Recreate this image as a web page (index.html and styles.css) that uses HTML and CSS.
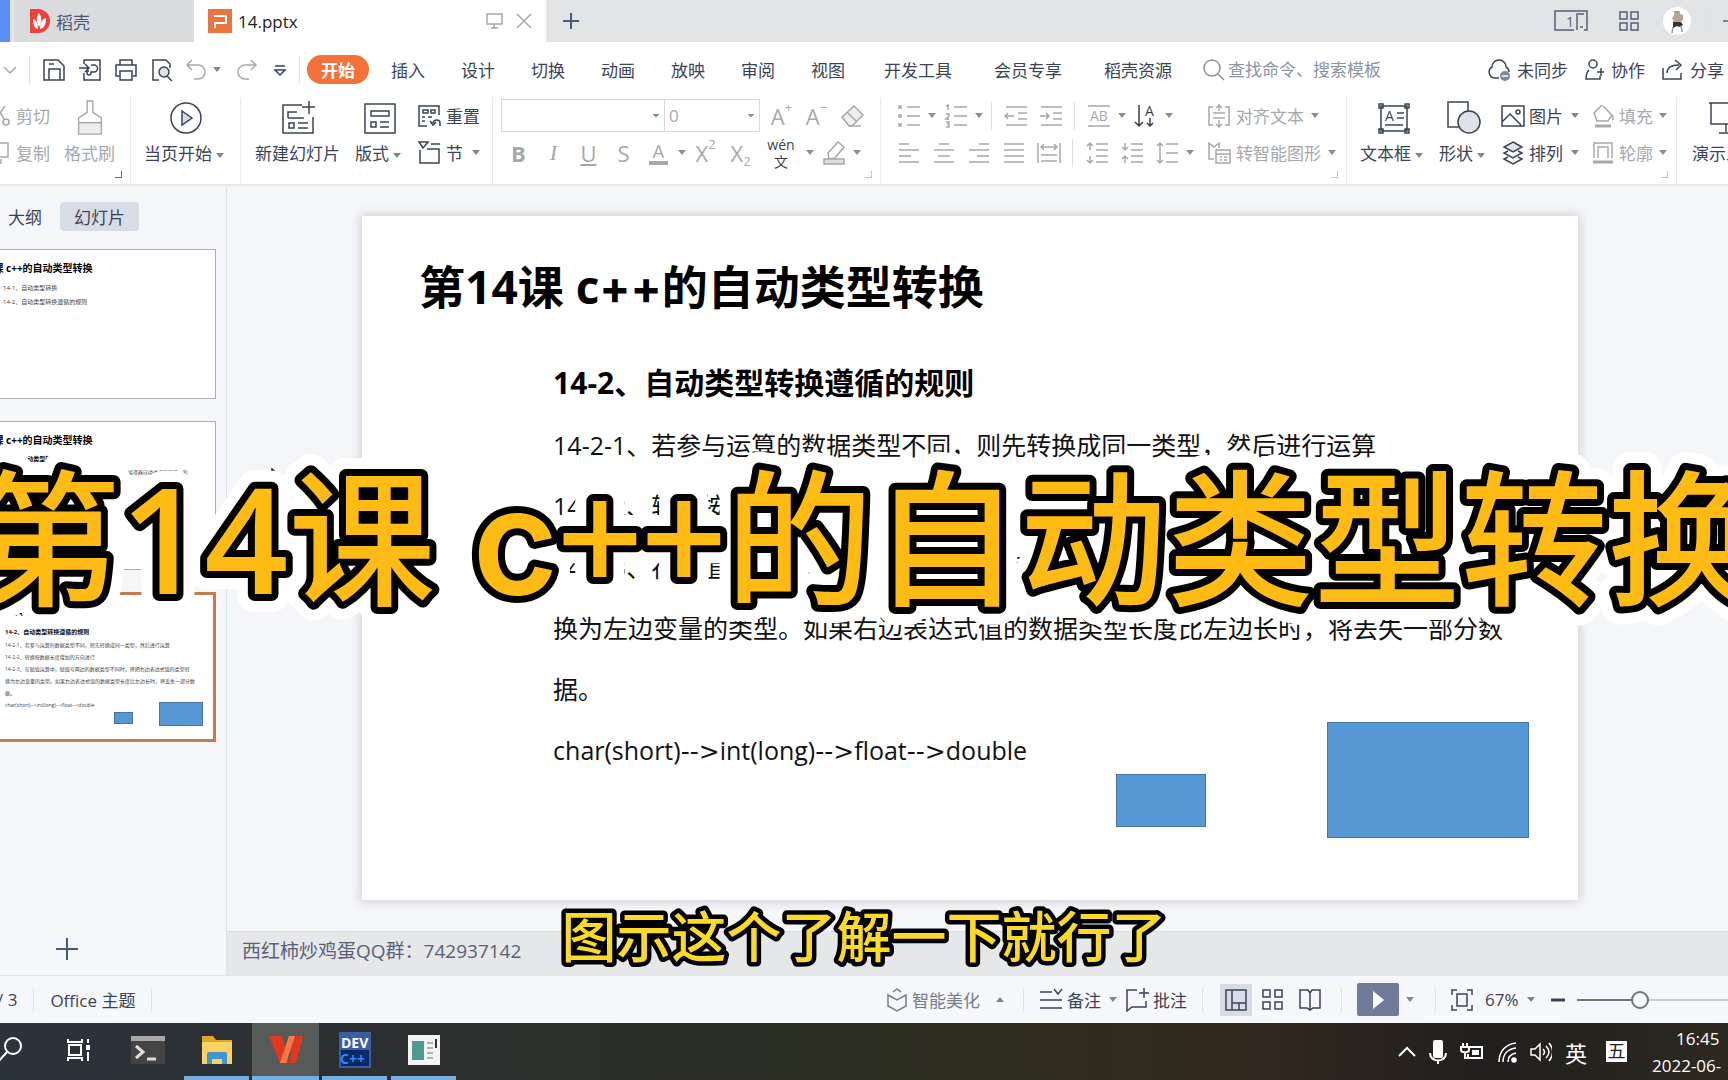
FILE: index.html
```html
<!DOCTYPE html>
<html lang="zh-CN">
<head>
    <meta charset="utf-8">
    <title>14.pptx - WPS 演示</title>
    <link rel="stylesheet" href="styles.css">
</head>
<body>
    <header class="tabbar">
        <span class="home-tab"></span>
        <button class="tab">
            <svg class="i20 solid" viewBox="0 0 20 24"><path fill="#f0403c" d="M0 0h8a12 12 0 0 1 0 24H0z"/><path fill="#fff" d="M9 4c3 4 3 9 0 14-3-5-3-10 0-14zM3 10c3 1 5 4 5 10-4-1-5-5-5-10zM16 9c0 5-1 10-6 11 0-6 2-10 6-11z"/></svg>
            稻壳
        </button>
        <button class="tab active">
            <svg class="i24 solid" viewBox="0 0 24 24"><path fill="#ea7440" d="M0 0h24v24H0z"/><path fill="none" stroke="#fff" stroke-width="2" d="M6 7h12v7H7v5"/></svg>
            <span class="tab-name">14.pptx</span>
            <svg class="i18 soft" viewBox="0 0 18 18"><path d="M1 2h15v10H1zM8 12v4M5 16h7"/></svg>
            <svg class="i16 soft" viewBox="0 0 16 16"><path d="M1 1l14 14M15 1L1 15"/></svg>
        </button>
        <button class="new-tab" aria-label="新建">
            <svg class="i18" viewBox="0 0 18 18"><path stroke-width="2" d="M9 1v16M1 9h16"/></svg>
        </button>
        <div class="win-tools">
            <svg class="i34" viewBox="0 0 34 22"><path d="M20 20H1V1h32v19h-3M23 20V4h7M26 17h3"/><text x="12" y="17">1</text></svg>
            <svg class="i22" viewBox="0 0 22 22"><path d="M2 2h7v7H2zM13 2h7v7h-7zM2 13h7v7H2zM13 13h7v7h-7z"/></svg>
            <svg class="i28 solid" viewBox="0 0 28 28"><circle cx="14" cy="14" r="14" fill="#fff"/><path fill="#b5a48e" d="M12 4h4l1 3 3 1v5l-3 2h-6l-2-4 2-3z"/><path fill="#333" d="M10 15h8l2 3-4 2-2-1-4 2z"/><path fill="none" stroke="#999" d="M10 20l-1 6M18 19l1 6M11 5h6"/></svg>
            <span class="vline"></span>
            <svg class="i16" viewBox="0 0 16 16"><path d="M1 8h14"/></svg>
        </div>
    </header>

    <nav class="menubar">
        <div class="quick">
            <svg class="i14 soft" viewBox="0 0 14 14"><path d="M1 4l6 6 6-6"/></svg>
            <span class="vline"></span>
            <svg class="i24" viewBox="0 0 24 24"><path d="M2 2h14l6 6v14H2zM7 22V11h11v11M7 6h5"/></svg>
            <svg class="i24" viewBox="0 0 24 24"><path d="M6 6V2h16v20H6v-7M1 10h9M7 6l4 4-4 4M13 7h3a3 3 0 0 1 0 7h-3v1a2 2 0 1 1-2-2"/></svg>
            <svg class="i24" viewBox="0 0 24 24"><path d="M6 7V2h12v5M5 18H2V7h20v11h-3M6 13h12v9H6z"/></svg>
            <svg class="i24" viewBox="0 0 24 24"><path d="M9 22H3V2h13l4 4v4"/><circle cx="14" cy="14" r="5" fill="#dfe3ea"/><path d="M17 18l5 5"/></svg>
            <svg class="i20 soft" viewBox="0 0 20 22"><path d="M6 1L1 6l5 5M1 6h11a6 6 0 0 1 0 14H8"/></svg>
            <i class="caret"></i>
            <svg class="i20 soft redo" viewBox="0 0 20 22"><path d="M14 1l5 5-5 5M19 6H8a6 6 0 0 0 0 14h4"/></svg>
            <svg class="i14" viewBox="0 0 14 14"><path d="M2 3h10M2 7h10l-5 5z"/></svg>
            <span class="vline"></span>
        </div>
        <div class="menu-tabs">
            <button class="current">开始</button><button>插入</button><button>设计</button><button>切换</button><button>动画</button><button>放映</button><button>审阅</button><button>视图</button><button class="long">开发工具</button><button class="long">会员专享</button><button class="long">稻壳资源</button>
        </div>
        <label class="search">
            <svg class="i22" viewBox="0 0 22 22"><circle cx="9" cy="9" r="8"/><path d="M15 15l6 6"/></svg>
            <input type="text" placeholder="查找命令、搜索模板">
        </label>
        <div class="account">
            <button><svg class="i24" viewBox="0 0 24 24"><path d="M12 20H7A6 6 0 0 1 5 9a7 7 0 0 1 14 0c2 1 3 2 3 5"/><circle cx="18" cy="18" r="5" fill="#7c88a4" stroke="none"/><path stroke="#fff" d="M15 18h6"/></svg>未同步</button>
            <button><svg class="i20" viewBox="0 0 20 22"><circle cx="8" cy="5" r="4"/><path d="M4 11c-2 2-3 5-3 9h14v-3M12 13h7M16 9v8"/></svg>协作</button>
            <button><svg class="i22" viewBox="0 0 22 22"><path d="M1 9v11h18v-6M5 14c0-5 4-8 12-8M13 1l6 5-5 5"/></svg>分享</button>
        </div>
    </nav>

    <section class="ribbon">
        <div class="group g-clip">
            <div class="stack off">
                <button><svg class="i20" viewBox="0 0 20 24"><circle cx="4" cy="18" r="3"/><circle cx="15" cy="18" r="3"/><path d="M5 15L14 2M13 15L5 2"/></svg>剪切</button>
                <button><svg class="i20" viewBox="0 0 20 24"><path d="M3 2h14v14H3zM0 8v14h10v-4"/></svg>复制</button>
            </div>
            <button class="big off"><svg viewBox="0 0 34 38"><path fill="#eee" stroke="none" d="M5 25h24v11H5z"/><path d="M14 1h6v12l9 6v17H5V19l9-6zM5 24h24"/></svg>格式刷</button>
            <i class="corner dark"></i>
        </div>
        <div class="group g-play">
            <button class="big"><svg viewBox="0 0 34 36"><circle cx="17" cy="18" r="15"/><path fill="#d8dce4" d="M13 11l10 7-10 7z"/></svg><span>当页开始<i class="caret"></i></span></button>
        </div>
        <div class="group g-slides">
            <button class="big"><svg viewBox="0 0 34 36"><path d="M21 5H2v28h30V17M28 1v13M21 7h13M7 13v-1h9M7 18h16M7 13v5M8 23h5v5H8zM17 23h10M17 28h10"/></svg>新建幻灯片</button>
            <button class="big"><svg viewBox="0 0 34 36"><path d="M2 4h30v29H2zM8 11h18v5H8zM8 22h5v5H8zM17 22h9M17 27h9"/></svg><span>版式<i class="caret"></i></span></button>
            <div class="stack">
                <button><svg class="i24" viewBox="0 0 24 24"><path d="M10 22H2V2h20v9M6 6h5v3H6zM14 6h4v3h-4zM5 13h3M5 17h3M11 13h4M23 22v-3c0-4-6-4-7 0M13 17l3 4 3-3"/></svg>重置</button>
                <button><svg class="i24" viewBox="0 0 24 24"><path d="M2 1h9L6 7zM14 3h9M3 9v13h19V8H10"/></svg>节<i class="caret"></i></button>
            </div>
        </div>
        <div class="group g-font">
            <div class="stack off">
                <div class="row">
                    <select class="combo font-name" aria-label="字体"><option></option></select>
                    <select class="combo font-size" aria-label="字号"><option>0</option></select>
                    <button class="sq ltr">A<sup>+</sup></button>
                    <button class="sq ltr">A<sup>−</sup></button>
                    <button class="sq" aria-label="清除格式"><svg class="i24" viewBox="0 0 24 24"><path fill="#eee" d="M2 13L14 2l9 9-11 11H9z"/><path d="M7 8l9 9M9 22h12"/></svg></button>
                </div>
                <div class="row">
                    <button class="sq ltr bold">B</button>
                    <button class="sq ltr ital">I</button>
                    <button class="sq ltr under">U</button>
                    <button class="sq ltr strike">S</button>
                    <button class="sq"><span class="fill-a">A</span></button><i class="caret"></i>
                    <button class="sq ltr">X<sup>2</sup></button>
                    <button class="sq ltr">X<sub>2</sub></button>
                    <button class="sq pinyin on"><span>wén</span><span>文</span></button><i class="caret"></i>
                    <button class="sq" aria-label="突出显示"><svg class="i24" viewBox="0 0 24 24"><path d="M6 12L16 1l6 5-9 11-6 1z"/><path fill="#ddd" d="M2 18h20v5H2z"/></svg></button><i class="caret"></i>
                </div>
            </div>
            <i class="corner"></i>
        </div>
        <div class="group g-para">
            <div class="stack off">
                <div class="row">
                    <button class="sq"><svg class="i24" viewBox="0 0 24 24"><path d="M10 3h13M10 12h13M10 21h13M2 2h2v2H2zM2 11h2v2H2zM2 20h2v2H2z"/></svg></button><i class="caret"></i>
                    <button class="sq"><svg class="i24" viewBox="0 0 24 24"><path d="M10 3h13M10 12h13M10 21h13M2 2l2-1v5M2 10h3v2l-3 3h3M2 18h3v2H3h2v3H2"/></svg></button><i class="caret"></i>
                    <span class="vline"></span>
                    <button class="sq"><svg class="i24" viewBox="0 0 24 24"><path d="M2 3h21M14 9h9M14 15h9M2 21h21M1 12h9M4 9l-3 3 3 3"/></svg></button>
                    <button class="sq"><svg class="i24" viewBox="0 0 24 24"><path d="M2 3h21M14 9h9M14 15h9M2 21h21M1 12h9M7 9l3 3-3 3"/></svg></button>
                    <span class="vline"></span>
                    <button class="sq"><svg class="i24" viewBox="0 0 24 24"><path d="M1 2h22M1 22h22"/><text x="3" y="17">AB</text></svg></button><i class="caret"></i>
                    <button class="sq on"><svg class="i24" viewBox="0 0 24 24"><path d="M5 1v21M1 18l4 4 4-4M16 14v8M13 19l3 3 3-3"/><text x="11" y="12">A</text></svg></button><i class="caret"></i>
                </div>
                <div class="row">
                    <button class="sq"><svg class="i24" viewBox="0 0 24 24"><path d="M2 3h10M2 9h20M2 15h12M2 21h20"/></svg></button>
                    <button class="sq"><svg class="i24" viewBox="0 0 24 24"><path d="M7 3h10M2 9h20M6 15h12M2 21h20"/></svg></button>
                    <button class="sq"><svg class="i24" viewBox="0 0 24 24"><path d="M12 3h10M2 9h20M10 15h12M2 21h20"/></svg></button>
                    <button class="sq"><svg class="i24" viewBox="0 0 24 24"><path d="M2 3h20M2 9h20M2 15h20M2 21h20"/></svg></button>
                    <button class="sq"><svg class="i24" viewBox="0 0 24 24"><path d="M1 2v20M23 2v20M4 6h16M7 3L4 6l3 3M17 3l3 3-3 3M4 14h16M4 20h16"/></svg></button>
                    <span class="vline"></span>
                    <button class="sq"><svg class="i24" viewBox="0 0 24 24"><path d="M11 3h12M11 9h12M11 15h12M11 21h12M5 9V2M2 5l3-3 3 3M5 15v7M2 19l3 3 3-3"/></svg></button>
                    <button class="sq"><svg class="i24" viewBox="0 0 24 24"><path d="M11 3h12M11 9h12M11 15h12M11 21h12M5 2v7M2 6l3 3 3-3M5 22v-7M2 18l3-3 3 3"/></svg></button>
                    <button class="sq"><svg class="i24" viewBox="0 0 24 24"><path d="M11 3h12M11 12h12M11 21h12M5 2v20M2 5l3-3 3 3M2 19l3 3 3-3"/></svg></button><i class="caret"></i>
                </div>
            </div>
            <div class="stack off">
                <button><svg class="i24" viewBox="0 0 24 24"><path d="M6 3H2v18h4M18 3h4v18h-4M6 9h12M6 14h12M12 7V1M9 4l3-3 3 3M12 16v7M9 20l3 3 3-3"/></svg>对齐文本<i class="caret"></i></button>
                <button><svg class="i24" viewBox="0 0 24 24"><path d="M7 18H2V2l5 4 5-4v5M9 9h14v13H9zM9 13h14M13 16h2M17 16h3M13 19h2M17 19h3"/></svg>转智能图形<i class="caret"></i></button>
            </div>
            <i class="corner"></i>
        </div>
        <div class="group g-draw">
            <button class="big"><svg viewBox="0 0 34 36"><path d="M4 6h26v25H4zM2 4h4v4H2zM28 4h4v4h-4zM2 29h4v4H2zM28 29h4v4h-4zM20 13h7M20 18h7M8 25h18"/><text x="8" y="21">A</text></svg><span>文本框<i class="caret"></i></span></button>
            <button class="big"><svg viewBox="0 0 34 36"><path d="M1 2h20v25H1z"/><circle cx="22" cy="22" r="11" fill="#dfe1e6"/></svg><span>形状<i class="caret"></i></span></button>
            <div class="stack">
                <button><svg class="i24" viewBox="0 0 24 24"><path d="M1 2h22v20H1zM1 18l8-8 11 11"/><circle cx="17" cy="8" r="2"/></svg>图片<i class="caret"></i></button>
                <button><svg class="i24" viewBox="0 0 24 24"><path fill="#e3e5e9" d="M12 1l9 5-9 5-9-5z"/><path d="M7 10l-4 2 9 5 9-5-4-2M7 16l-4 2 9 5 9-5-4-2"/></svg>排列<i class="caret"></i></button>
            </div>
            <div class="stack off">
                <button><svg class="i24" viewBox="0 0 24 24"><path d="M11 1L6 6M9 3L3 9l3 8h11l4-6-9-9M21 11c2 3 1 5 0 5"/><path stroke-width="3" d="M4 22h16"/></svg>填充<i class="caret"></i></button>
                <button><svg class="i24" viewBox="0 0 24 24"><path d="M3 17V2h18v15M7 17V6h10v11"/><path stroke-width="3" d="M2 21h20"/></svg>轮廓<i class="caret"></i></button>
            </div>
            <i class="corner"></i>
        </div>
        <div class="group g-tools">
            <button class="big"><svg viewBox="0 0 34 36"><path d="M0 3h34M2 3v21h30V3M17 24v8M10 33h14"/></svg>演示工具</button>
        </div>
    </section>

    <main class="workspace">
        <aside class="panel">
            <div class="panel-tabs">
                <button>大纲</button>
                <button class="current">幻灯片</button>
            </div>
            <div class="thumbs">
                <div class="thumb">
                    <h3>第14课 c++的自动类型转换</h3>
                    <p class="spaced">14-1、自动类型转换</p>
                    <p class="spaced">14-2、自动类型转换遵循的规则</p>
                </div>
                <div class="thumb">
                    <h3>第14课 c++的自动类型转换</h3>
                    <h4>14-1、自动类型转换</h4>
                    <p>14-1-1、自动类型转换又称为隐式类型转换，隐式转换由编译器自动进行的转换，和</p>
                </div>
                <div class="thumb selected">
                    <h3>第14课 c++的自动类型转换</h3>
                    <h4>14-2、自动类型转换遵循的规则</h4>
                    <p>14-2-1、若参与运算的数据类型不同，则先转换成同一类型，然后进行运算</p>
                    <p>14-2-2、转换按数据长度增加的方向进行</p>
                    <p>14-2-3、在赋值运算中，赋值号两边的数据类型不同时，将把右边表达式值的类型转</p>
                    <p>换为左边变量的类型。如果右边表达式值的数据类型长度比左边长时，将丢失一部分数</p>
                    <p>据。</p>
                    <p>char(short)--&gt;int(long)--&gt;float--&gt;double</p>
                    <span class="box box-small"></span>
                    <span class="box box-large"></span>
                </div>
            </div>
            <button class="add-slide" aria-label="新建幻灯片"><svg class="i22" viewBox="0 0 22 22"><path stroke-width="2" d="M11 0v22M0 11h22"/></svg></button>
        </aside>
        <div class="stage">
            <div class="canvas">
                <article class="slide">
                    <h1>第14课 c<span class="plus">++</span>的自动类型转换</h1>
                    <div class="slide-body">
                        <h2>14-2、自动类型转换遵循的规则</h2>
                        <p>14-2-1、若参与运算的数据类型不同，则先转换成同一类型，然后进行运算</p>
                        <p>14-2-2、转换按数据长度增加的方向进行</p>
                        <p>14-2-3、在赋值运算中，赋值号两边的数据类型不同时，将把右边表达式值的类型转</p>
                        <p>换为左边变量的类型。如果右边表达式值的数据类型长度比左边长时，将丢失一部分数</p>
                        <p>据。</p>
                        <p>char(short)<span class="arrow">--&gt;</span>int(long)<span class="arrow">--&gt;</span>float<span class="arrow">--&gt;</span>double</p>
                    </div>
                    <span class="box box-small"></span>
                    <span class="box box-large"></span>
                </article>
            </div>
            <div class="notes">西红柿炒鸡蛋QQ群：742937142</div>
        </div>
        <svg class="pointer" viewBox="0 0 20 30"><path fill="#fff" stroke="#222" d="M1 1v22l5-5 4 9 4-2-4-8h7z"/></svg>
    </main>

    <footer class="status">
        <span class="pages">/ 3</span>
        <span class="vline"></span>
        <span>Office 主题</span>
        <span class="vline"></span>
        <div class="status-right">
            <button class="dim beauty"><svg class="i22" viewBox="0 0 22 26"><path d="M7 5l4-3 4 3M2 8l9 5 9-5v11l-9 5-9-5z"/></svg>智能美化<i class="caret up"></i></button>
            <span class="vline"></span>
            <button><svg class="i24" viewBox="0 0 24 24"><path d="M1 4h12M1 12h22M1 20h22M15 1l4 5 4-5"/></svg>备注<i class="caret"></i></button>
            <button class="comment-btn"><svg class="i24" viewBox="0 0 24 26"><path d="M12 3H2v21l5-4h14v-6M19 1v10M14 6h10"/></svg>批注</button>
            <span class="vline"></span>
            <div class="views">
                <button class="current" aria-label="普通视图"><svg class="i22" viewBox="0 0 22 22"><path d="M1 1h20v20H1zM7 1v20M7 14h14M14 14v7"/></svg></button>
                <button aria-label="幻灯片浏览"><svg class="i22" viewBox="0 0 22 22"><path d="M1 1h7v7H1zM13 1h7v7h-7zM1 13h7v7H1zM13 13h7v7h-7z"/></svg></button>
                <button aria-label="阅读视图"><svg class="i22" viewBox="0 0 22 22"><path d="M11 4L9 1H1v18h7l3 2 3-2h7V1h-8zM11 4v17"/></svg></button>
            </div>
            <span class="vline"></span>
            <button class="play" aria-label="放映"><svg class="i20 solid" viewBox="0 0 20 20"><path fill="#fff" d="M5 1l11 9-11 9z"/></svg></button><i class="caret"></i>
            <span class="vline"></span>
            <div class="zoom">
                <svg class="i22" viewBox="0 0 22 22"><path d="M1 6V1h5M16 1h5v5M21 16v5h-5M6 21H1v-5M6 5h10v12H6z"/></svg>
                <button>67%<i class="caret"></i></button>
                <button aria-label="缩小"><svg class="i14" viewBox="0 0 14 14"><path stroke-width="3" d="M0 7h14"/></svg></button>
                <input type="range" min="0" max="100" value="41" aria-label="显示比例">
            </div>
        </div>
    </footer>

    <div class="taskbar">
        <div class="apps">
            <button class="app" aria-label="搜索"><svg class="i28" viewBox="0 0 28 28"><circle cx="17" cy="10" r="8" stroke-width="2"/><path stroke-width="2" d="M11 16L2 26"/></svg></button>
            <button class="app" aria-label="任务视图"><svg class="i24" viewBox="0 0 24 24"><path stroke-width="2" d="M1 1v3h14V1M2 7h12v10H2zM1 23v-3h14v3M21 1v4M21 14v9"/><path fill="#fff" stroke="none" d="M19 7h4v5h-4z"/></svg></button>
            <button class="app" aria-label="终端"><svg class="i34 solid" viewBox="0 0 34 28"><path fill="#444" d="M0 0h34v28H0z"/><path fill="#a8a8a8" d="M0 0h34v5H0z"/><path fill="none" stroke="#ddd" stroke-width="3" d="M5 10l7 6-7 6M16 23h9"/></svg></button>
            <button class="app open" aria-label="文件资源管理器"><svg class="i32 solid" viewBox="0 0 32 30"><path fill="#e0a526" d="M1 1h11l3 4h16v6H1z"/><path fill="#fbd364" d="M1 7h30v22H1z"/><path fill="#3d97d3" d="M6 29V19q0-2 2-2h16q2 0 2 2v10h-5v-5H11v5z"/></svg></button>
            <button class="app open active" aria-label="WPS"><svg class="i34 solid" viewBox="0 0 34 30"><path fill="#e2381f" d="M0 1h13l7 27h-9z"/><path fill="#e2381f" d="M22 10l5-9h7l-7 27h-6z"/><path fill="#ff7a45" d="M20 1h6l-9 27h-6z"/></svg></button>
            <button class="app open" aria-label="Dev-C++"><svg class="i32 solid" viewBox="0 0 32 36"><path fill="#3a5da6" d="M0 0h32v36H0z"/><path fill="#082765" d="M2 18h28v16H2z"/><text class="dev" x="2" y="16">DEV</text><text class="cpp" x="1" y="32">C++</text></svg></button>
            <button class="app open" aria-label="窗口"><svg class="i32 solid" viewBox="0 0 32 30"><path fill="#f3f3f3" d="M0 0h32v30H0z"/><path fill="#4d9a92" d="M4 6h12v19H4z"/><path stroke="#999" d="M19 8h6M19 13h6M19 18h6M19 23h6"/><path stroke="#333" stroke-width="2" d="M28 4v9"/></svg></button>
        </div>
        <div class="tray">
            <svg class="i18" viewBox="0 0 18 18"><path stroke-width="2" d="M1 13l8-8 8 8"/></svg>
            <svg class="i18" viewBox="0 0 18 26"><rect x="4" y="1" width="10" height="18" rx="2" fill="#fff" stroke="none"/><path stroke-width="2" d="M1 14c0 10 16 10 16 0M9 21v4"/></svg>
            <svg class="i24" viewBox="0 0 24 20"><path stroke-width="2" d="M8 5h14v11H8v-4M3 1v3M7 1v3M1 5h8v3c0 3-8 3-8 0zM5 10v6h4"/><path fill="#fff" stroke="none" d="M12 8h7v5h-7z"/></svg>
            <svg class="i20" viewBox="0 0 20 22"><path d="M2 21C2 10 9 3 19 2M6 21c0-8 5-13 13-14M11 21c0-5 3-8 8-9"/><circle cx="17" cy="19" r="2" fill="#fff"/></svg>
            <svg class="i22" viewBox="0 0 22 22"><path d="M1 8h4l5-5v16l-5-5H1zM13 8c2 2 2 4 0 6M16 5c4 4 4 8 0 12M19 2c5 6 5 12 0 18"/></svg>
            <span class="ime">英</span>
            <span class="ime-mode">五</span>
            <time class="clock"><span>16:45</span><span>2022-06-</span></time>
        </div>
    </div>

    <!-- title and subtitle burned over the screen -->
    <svg class="captions">
        <defs>
            <text id="title" class="title" x="50%" y="55%">第<tspan class="digits">14</tspan>课<tspan class="latin"> c</tspan><tspan class="cjk">++</tspan>的自动类型转换</text>
        </defs>
        <use href="#title" class="halo"/>
        <use href="#title" class="face"/>
        <text class="subtitle" x="50%" y="88.6%">图示这个了解一下就行了</text>
    </svg>
</body>
</html>
```
FILE: styles.css
```css
* {
    box-sizing: border-box;
}
body {
    margin: 0;
    height: 100vh;
    display: flex;
    flex-direction: column;
    position: relative;
    overflow: hidden;
    font-family: "Open Sans", "Noto Sans CJK SC", sans-serif;
    font-size: 17px;
    color: #3a4356;
    background: #f4f6f9;
}
button {
    font: inherit;
    color: inherit;
    background: none;
    border: 0;
    padding: 0;
    display: flex;
    align-items: center;
    white-space: nowrap;
    cursor: pointer;
}
h1, h2, h3, h4, p {
    margin: 0;
    white-space: nowrap;
}
svg {
    flex: none;
    fill: none;
    stroke: currentColor;
    stroke-width: 1.5;
}
svg text {
    fill: currentColor;
    stroke: none;
    font-size: 14px;
}
.solid {
    stroke: none;
}
.i14 { width: 14px; }
.i16 { width: 16px; }
.i18 { width: 18px; }
.i20 { width: 20px; }
.i22 { width: 22px; }
.i24 { width: 24px; }
.i28 { width: 28px; }
.i32 { width: 32px; }
.i34 { width: 34px; }
.soft {
    color: #a4a8af;
}
.vline {
    flex: none;
    width: 1px;
    height: 28px;
    background: #dcdfe3;
}
.caret {
    flex: none;
    display: inline-block;
    margin: 0 4px;
    border: 4px solid transparent;
    border-top: 5px solid #80858f;
    border-bottom: 0;
    vertical-align: middle;
}
.caret.up {
    border-top: 0;
    border-bottom: 5px solid #80858f;
}

/* document tabs */
.tabbar {
    flex: none;
    height: 42px;
    display: flex;
    background: #e1e3e5;
}
.home-tab {
    width: 10px;
    margin-right: 4px;
    background: #5b8ff5;
}
.tab {
    width: 180px;
    padding-left: 16px;
    gap: 6px;
    background: #d9dbde;
    color: #4c5872;
}
.tab.active {
    width: 352px;
    padding: 0 14px;
    background: #fff;
    color: #222;
}
.tab-name {
    flex: 1;
    text-align: left;
}
.tab.active .i16 {
    margin-left: 6px;
}
.new-tab {
    padding: 0 16px;
    color: #46597c;
}
.win-tools {
    margin-left: auto;
    margin-right: -10px;
    display: flex;
    align-items: center;
    gap: 15px;
    color: #56617a;
}
.win-tools .i22 {
    margin: 0 8px 0 15px;
}

/* menu row */
.menubar {
    flex: none;
    height: 55px;
    display: flex;
    align-items: center;
    background: #fff;
}
.quick {
    width: 307px;
    display: flex;
    align-items: center;
    gap: 12px;
    padding-left: 3px;
}
.quick .caret {
    margin: 0 4px 0 -5px;
}
.quick .redo {
    margin-right: 4px;
}
.menu-tabs {
    display: flex;
    gap: 8px;
}
.menu-tabs button {
    height: 29px;
    padding: 0 14px;
    border-radius: 15px;
}
.menu-tabs .long {
    padding: 0 17px;
}
.menu-tabs .current {
    background: #f5713a;
    color: #fff;
    font-weight: bold;
}
.search {
    display: flex;
    align-items: center;
    gap: 3px;
    margin-left: 14px;
    color: #8b93a5;
}
.search input {
    width: 170px;
    border: 0;
    padding: 0;
    outline: 0;
    font: inherit;
    color: inherit;
    background: none;
}
.search input::placeholder {
    color: #8b93a5;
}
.account {
    margin-left: auto;
    padding-right: 4px;
    display: flex;
    gap: 17px;
}
.account button {
    gap: 6px;
}

/* ribbon */
.ribbon {
    flex: none;
    height: 89px;
    display: flex;
    background: #fff;
    border-bottom: 2px solid #e6e8ea;
    overflow: hidden;
}
.group {
    flex: none;
    position: relative;
    display: flex;
    align-items: flex-start;
    border-right: 1px solid #e8eaec;
}
.g-clip {
    width: 131px;
    gap: 14px;
}
.g-clip .stack {
    margin-left: -9px;
}
.g-play {
    width: 110px;
    padding-left: 13px;
}
.g-slides {
    width: 252px;
    padding-left: 14px;
    gap: 15px;
}
.g-slides .stack {
    margin-left: -3px;
}
.g-font {
    width: 388px;
    padding-left: 8px;
}
.g-para {
    width: 466px;
    padding-left: 10px;
}
.g-para .stack + .stack {
    margin-left: auto;
    width: 139px;
}
.g-para .vline {
    margin: 0 6px;
}
.g-draw {
    width: 330px;
    padding-left: 13px;
    gap: 12px;
}
.g-tools {
    padding-left: 15px;
}
.stack {
    display: flex;
    flex-direction: column;
}
.stack > button,
.row {
    height: 37px;
    display: flex;
    align-items: center;
}
.stack > button {
    gap: 5px;
}
.g-draw .stack > button {
    gap: 4px;
}
.stack > button .caret {
    margin-right: 0;
}
.big {
    flex-direction: column;
    padding-top: 3px;
    line-height: 35px;
}
.big svg {
    width: 34px;
    height: 36px;
}
.off {
    color: #a6a8ac;
}
.off .caret {
    margin: 0 2px;
    border-top-color: #8c8f94;
}
.on {
    color: #3a3f48;
}
.sq {
    width: 35px;
    height: 34px;
    justify-content: center;
}
.ltr {
    font-size: 22px;
    line-height: 30px;
}
.ltr sup,
.ltr sub {
    font-size: 13px;
    line-height: 17px;
}
.ltr sup {
    align-self: flex-start;
}
.ltr sub {
    align-self: flex-end;
}
.bold {
    font-weight: bold;
}
.ital {
    font-family: "Liberation Serif", serif;
    font-style: italic;
}
.under {
    text-decoration: underline;
}
.fill-a {
    font-size: 18px;
    line-height: 20px;
    border-bottom: 4px solid #a6a8ac;
    padding: 0 4px;
}
.pinyin {
    width: 46px;
    flex-direction: column;
    font-size: 14px;
    line-height: 17px;
}
.combo {
    height: 33px;
    padding: 0 4px;
    border: 1px solid #d5d7da;
    border-radius: 0;
    background-color: #fff;
    background-image: linear-gradient(135deg, #8c8f94 50%, transparent 50%), linear-gradient(225deg, #8c8f94 50%, transparent 50%);
    background-size: 4px 4px;
    background-position: right 4px center, right 8px center;
    background-repeat: no-repeat;
    font: inherit;
    color: inherit;
    appearance: none;
}
.font-name {
    width: 164px;
}
.font-size {
    width: 96px;
    margin-left: -1px;
    margin-right: 4px;
}
.corner {
    position: absolute;
    right: 8px;
    bottom: 6px;
    width: 7px;
    height: 7px;
    border-right: 1px solid #c0c3c7;
    border-bottom: 1px solid #c0c3c7;
}
.corner.dark {
    border-color: #6c7078;
}

/* slide list */
.workspace {
    flex: 1;
    min-height: 0;
    display: flex;
    position: relative;
}
.panel {
    flex: none;
    width: 227px;
    display: flex;
    flex-direction: column;
    overflow: hidden;
    border-right: 1px solid #dde0e4;
}
.panel-tabs {
    display: flex;
    gap: 18px;
    padding: 16px 0 18px 8px;
}
.panel-tabs button {
    height: 29px;
}
.panel-tabs .current {
    padding: 0 14px;
    border-radius: 4px;
    background: #d8dce4;
}
.thumbs {
    display: flex;
    flex-direction: column;
    align-items: flex-end;
    gap: 22px;
    padding-right: 10px;
}
.thumb {
    position: relative;
    width: 266px;
    aspect-ratio: 16 / 9;
    padding: 10px 0 0 52px;
    background: #fff;
    border: 1px solid #a9acb0;
    color: #444;
}
.thumb.selected {
    border: 3px solid #c67a52;
}
.thumb h3 {
    margin: 0 0 5px -31px;
    font-size: 10px;
    line-height: 16px;
    color: #000;
}
.thumb h4 {
    font-size: 6px;
    line-height: 13px;
    color: #111;
}
.thumb p {
    font-size: 5px;
    line-height: 12px;
}
.thumb .spaced {
    font-size: 6px;
    line-height: 14px;
}
.add-slide {
    margin: auto 0 15px 56px;
    color: #46597c;
}
.box {
    position: absolute;
    background: #5697d6;
    border: 1px solid #47749f;
}
.box-small {
    left: 62%;
    top: 81.6%;
    width: 7.4%;
    height: 7.8%;
}
.box-large {
    left: 79.4%;
    top: 74%;
    width: 16.6%;
    height: 17%;
}

/* editing area */
.stage {
    flex: 1;
    min-width: 0;
    display: flex;
    flex-direction: column;
}
.canvas {
    flex: 1;
    padding: 30px 10% 0 9%;
}
.slide {
    position: relative;
    aspect-ratio: 16 / 9;
    padding: 36px 0 0 57px;
    background: #fff;
    box-shadow: 0 0 10px 2px rgba(0, 0, 0, 0.15);
    color: #111;
}
.slide h1 {
    font-size: 46px;
    line-height: 68px;
    color: #000;
}
.plus {
    font-family: Inter, sans-serif;
}
.arrow {
    font-family: "DejaVu Sans", sans-serif;
}
.slide-body {
    padding: 30px 0 0 134px;
}
.slide h2 {
    font-size: 30px;
    line-height: 64px;
    color: #000;
}
.slide p {
    font-size: 25px;
    line-height: 61px;
}
.notes {
    flex: none;
    height: 44px;
    padding-left: 15px;
    line-height: 38px;
    font-size: 19px;
    color: #586178;
    background: #e6e7e8;
    border-top: 1px solid #d9dbde;
}
.pointer {
    position: absolute;
    left: 271px;
    top: 282px;
    width: 20px;
}

/* status line */
.status {
    flex: none;
    height: 48px;
    display: flex;
    align-items: center;
    gap: 16px;
    background: #f5f7fa;
    border-top: 1px solid #e2e4e8;
}
.status .vline {
    height: 22px;
}
.pages {
    margin-left: -3px;
}
.status-right {
    flex: none;
    width: 842px;
    margin-left: auto;
    display: flex;
    align-items: center;
    gap: 15px;
}
.status-right button {
    gap: 4px;
}
.dim {
    color: #777d89;
}
.beauty .caret {
    margin-left: 12px;
}
.comment-btn {
    margin-left: -11px;
}
.views {
    display: flex;
    gap: 5px;
    margin-left: 2px;
}
.views button {
    height: 32px;
    padding: 0 5px;
}
.views .current {
    background: #d6dbe5;
}
.status-right .play {
    width: 42px;
    height: 33px;
    justify-content: center;
    background: #6f7b98;
    border-radius: 2px;
}
.play + .caret {
    margin: 0 6px 0 -8px;
}
.zoom {
    flex: 1;
    min-width: 0;
    display: flex;
    align-items: center;
    gap: 12px;
}
.zoom input {
    flex: 1;
    min-width: 0;
    margin: 0;
    height: 20px;
    appearance: none;
    background: linear-gradient(90deg, #6c7382 40%, #c9cdd4 40%) no-repeat center / 100% 2px;
}
.zoom input::-webkit-slider-thumb {
    appearance: none;
    width: 18px;
    height: 18px;
    border: 2px solid #6c7382;
    border-radius: 50%;
    background: #f5f7fa;
}

/* desktop taskbar */
.taskbar {
    flex: none;
    height: 57px;
    display: flex;
    justify-content: space-between;
    color: #fff;
    background: linear-gradient(90deg, #2b333c, #2b2e2e 25%, #2c2e20 52%, #33291f 72%, #211f1e 86%, #2d2920);
}
.apps {
    display: flex;
    gap: 2px;
    margin-left: -24px;
}
.app {
    width: 67px;
    justify-content: center;
    border-bottom: 4px solid transparent;
}
.app.open {
    border-image: linear-gradient(90deg, transparent 5px, #78aee0 5px, #78aee0 62px, transparent 62px) 4;
    border-width: 0 0 4px;
    border-style: solid;
}
.app.active {
    border-image: none;
    border-color: #78aee0;
    background: #565b59;
}
.app .dev,
.app .cpp {
    font-size: 14px;
    font-weight: bold;
    fill: #fff;
}
.app .cpp {
    fill: #2a8bff;
}
.tray {
    display: flex;
    align-items: center;
    gap: 13px;
}
.ime {
    font-size: 22px;
}
.ime-mode {
    width: 21px;
    margin-left: 6px;
    text-align: center;
    font-size: 18px;
    line-height: 21px;
    color: #222;
    background: #fff;
}
.clock {
    display: flex;
    flex-direction: column;
    width: 88px;
    padding-left: 12px;
    line-height: 27px;
}
.clock span:first-child {
    padding-left: 24px;
}

/* captions */
.captions {
    position: absolute;
    left: 0;
    top: 0;
    width: 100%;
    height: 100%;
    pointer-events: none;
    stroke-linejoin: round;
    text-anchor: middle;
    font-family: Inter, "Noto Sans CJK SC", sans-serif;
}
.captions .title {
    font-size: 147px;
    font-weight: 500;
    fill: inherit;
    stroke: inherit;
    paint-order: stroke;
}
.digits {
    font-family: "Open Sans", sans-serif;
    font-weight: 600;
}
.latin {
    font-weight: 600;
}
.cjk {
    font-family: "Noto Sans CJK SC", sans-serif;
}
.halo {
    fill: #fff;
    stroke: #fff;
    stroke-width: 36px;
}
.face {
    fill: #fdbb14;
    stroke: #000;
    stroke-width: 14px;
}
.captions .subtitle {
    font-size: 55px;
    font-weight: 500;
    fill: #fbd928;
    stroke: #000;
    stroke-width: 9px;
    paint-order: stroke;
}
```
